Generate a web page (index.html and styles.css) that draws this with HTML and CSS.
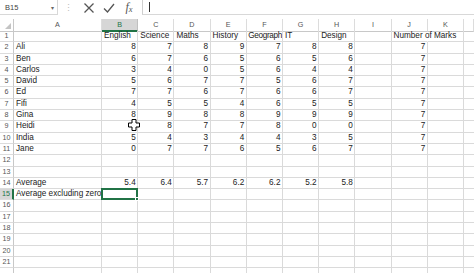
FILE: index.html
```html
<!DOCTYPE html>
<html>
<head>
<meta charset="utf-8">
<link rel="stylesheet" href="styles.css">
</head>
<body>
<div class="fbar">
  <div class="namebox"><span class="nb-text">B15</span><span class="nb-arrow">&#9662;</span></div>
  <div class="grip">&#8942;</div>
  <div class="fbtn">
    <svg width="12" height="12" viewBox="0 0 12 12"><path d="M1.5 1.5 L10.5 10.5 M10.5 1.5 L1.5 10.5" stroke="#555" stroke-width="1.3" fill="none"/></svg>
  </div>
  <div class="fbtn">
    <svg width="12" height="12" viewBox="0 0 12 12"><path d="M1 6.5 L4.5 10 L11 2" stroke="#555" stroke-width="1.3" fill="none"/></svg>
  </div>
  <div class="fbtn fx"><i>f</i><i class="x">x</i></div>
  <div class="finput"><span class="caret"></span></div>
</div>

<div class="sheet">
  <div class="row head">
    <div class="corner"><span class="tri"></span></div>
    <div class="ch">A</div><div class="ch sel">B</div><div class="ch">C</div><div class="ch">D</div><div class="ch">E</div><div class="ch">F</div><div class="ch">G</div><div class="ch">H</div><div class="ch">I</div><div class="ch">J</div><div class="ch">K</div><div class="ch last"></div>
  </div>

  <div class="row"><div class="rh">1</div><div class="c"></div><div class="c t">English</div><div class="c t">Science</div><div class="c t">Maths</div><div class="c t">History</div><div class="c t tight">Geograph</div><div class="c t">IT</div><div class="c t">Design</div><div class="c"></div><div class="c t over">Number of Marks</div><div class="c"></div><div class="c last"></div></div>
  <div class="row"><div class="rh">2</div><div class="c t">Ali</div><div class="c n">8</div><div class="c n">7</div><div class="c n">8</div><div class="c n">9</div><div class="c n">7</div><div class="c n">8</div><div class="c n">8</div><div class="c"></div><div class="c n">7</div><div class="c"></div><div class="c last"></div></div>
  <div class="row"><div class="rh">3</div><div class="c t">Ben</div><div class="c n">6</div><div class="c n">7</div><div class="c n">6</div><div class="c n">5</div><div class="c n">6</div><div class="c n">5</div><div class="c n">6</div><div class="c"></div><div class="c n">7</div><div class="c"></div><div class="c last"></div></div>
  <div class="row"><div class="rh">4</div><div class="c t">Carlos</div><div class="c n">3</div><div class="c n">4</div><div class="c n">0</div><div class="c n">5</div><div class="c n">6</div><div class="c n">4</div><div class="c n">4</div><div class="c"></div><div class="c n">7</div><div class="c"></div><div class="c last"></div></div>
  <div class="row"><div class="rh">5</div><div class="c t">David</div><div class="c n">5</div><div class="c n">6</div><div class="c n">7</div><div class="c n">7</div><div class="c n">5</div><div class="c n">6</div><div class="c n">7</div><div class="c"></div><div class="c n">7</div><div class="c"></div><div class="c last"></div></div>
  <div class="row"><div class="rh">6</div><div class="c t">Ed</div><div class="c n">7</div><div class="c n">7</div><div class="c n">6</div><div class="c n">7</div><div class="c n">6</div><div class="c n">6</div><div class="c n">7</div><div class="c"></div><div class="c n">7</div><div class="c"></div><div class="c last"></div></div>
  <div class="row"><div class="rh">7</div><div class="c t">Fifi</div><div class="c n">4</div><div class="c n">5</div><div class="c n">5</div><div class="c n">4</div><div class="c n">6</div><div class="c n">5</div><div class="c n">5</div><div class="c"></div><div class="c n">7</div><div class="c"></div><div class="c last"></div></div>
  <div class="row"><div class="rh">8</div><div class="c t">Gina</div><div class="c n">8</div><div class="c n">9</div><div class="c n">8</div><div class="c n">8</div><div class="c n">9</div><div class="c n">9</div><div class="c n">9</div><div class="c"></div><div class="c n">7</div><div class="c"></div><div class="c last"></div></div>
  <div class="row"><div class="rh">9</div><div class="c t">Heidi</div><div class="c n"></div><div class="c n">8</div><div class="c n">7</div><div class="c n">7</div><div class="c n">8</div><div class="c n">0</div><div class="c n">0</div><div class="c"></div><div class="c n">7</div><div class="c"></div><div class="c last"></div></div>
  <div class="row"><div class="rh">10</div><div class="c t">India</div><div class="c n">5</div><div class="c n">4</div><div class="c n">3</div><div class="c n">4</div><div class="c n">4</div><div class="c n">3</div><div class="c n">5</div><div class="c"></div><div class="c n">7</div><div class="c"></div><div class="c last"></div></div>
  <div class="row"><div class="rh">11</div><div class="c t">Jane</div><div class="c n">0</div><div class="c n">7</div><div class="c n">7</div><div class="c n">6</div><div class="c n">5</div><div class="c n">6</div><div class="c n">7</div><div class="c"></div><div class="c n">7</div><div class="c"></div><div class="c last"></div></div>
  <div class="row"><div class="rh">12</div><div class="c"></div><div class="c"></div><div class="c"></div><div class="c"></div><div class="c"></div><div class="c"></div><div class="c"></div><div class="c"></div><div class="c"></div><div class="c"></div><div class="c"></div><div class="c last"></div></div>
  <div class="row"><div class="rh">13</div><div class="c"></div><div class="c"></div><div class="c"></div><div class="c"></div><div class="c"></div><div class="c"></div><div class="c"></div><div class="c"></div><div class="c"></div><div class="c"></div><div class="c"></div><div class="c last"></div></div>
  <div class="row"><div class="rh">14</div><div class="c t">Average</div><div class="c n">5.4</div><div class="c n">6.4</div><div class="c n">5.7</div><div class="c n">6.2</div><div class="c n">6.2</div><div class="c n">5.2</div><div class="c n">5.8</div><div class="c"></div><div class="c"></div><div class="c"></div><div class="c last"></div></div>
  <div class="row"><div class="rh sel">15</div><div class="c t">Average excluding zero</div><div class="c active"><span class="handle"></span></div><div class="c"></div><div class="c"></div><div class="c"></div><div class="c"></div><div class="c"></div><div class="c"></div><div class="c"></div><div class="c"></div><div class="c"></div><div class="c last"></div></div>
  <div class="row"><div class="rh">16</div><div class="c"></div><div class="c"></div><div class="c"></div><div class="c"></div><div class="c"></div><div class="c"></div><div class="c"></div><div class="c"></div><div class="c"></div><div class="c"></div><div class="c"></div><div class="c last"></div></div>
  <div class="row"><div class="rh">17</div><div class="c"></div><div class="c"></div><div class="c"></div><div class="c"></div><div class="c"></div><div class="c"></div><div class="c"></div><div class="c"></div><div class="c"></div><div class="c"></div><div class="c"></div><div class="c last"></div></div>
  <div class="row"><div class="rh">18</div><div class="c"></div><div class="c"></div><div class="c"></div><div class="c"></div><div class="c"></div><div class="c"></div><div class="c"></div><div class="c"></div><div class="c"></div><div class="c"></div><div class="c"></div><div class="c last"></div></div>
  <div class="row"><div class="rh">19</div><div class="c"></div><div class="c"></div><div class="c"></div><div class="c"></div><div class="c"></div><div class="c"></div><div class="c"></div><div class="c"></div><div class="c"></div><div class="c"></div><div class="c"></div><div class="c last"></div></div>
  <div class="row"><div class="rh">20</div><div class="c"></div><div class="c"></div><div class="c"></div><div class="c"></div><div class="c"></div><div class="c"></div><div class="c"></div><div class="c"></div><div class="c"></div><div class="c"></div><div class="c"></div><div class="c last"></div></div>
  <div class="row"><div class="rh">21</div><div class="c"></div><div class="c"></div><div class="c"></div><div class="c"></div><div class="c"></div><div class="c"></div><div class="c"></div><div class="c"></div><div class="c"></div><div class="c"></div><div class="c"></div><div class="c last"></div></div>
  <div class="row"><div class="rh"></div><div class="c"></div><div class="c"></div><div class="c"></div><div class="c"></div><div class="c"></div><div class="c"></div><div class="c"></div><div class="c"></div><div class="c"></div><div class="c"></div><div class="c"></div><div class="c last"></div></div>

  <svg class="cursor" width="12" height="12" viewBox="0 0 12 12"><path d="M4 0.5 H8 V4 H11.5 V8 H8 V11.5 H4 V8 H0.5 V4 H4 Z" fill="#fff" stroke="#000" stroke-width="1"/></svg>
</div>
</body>
</html>
```
FILE: styles.css
```css
* { box-sizing: border-box; }
html, body { margin: 0; padding: 0; background: #fff; }
body {
  width: 474px;
  height: 273px;
  overflow: hidden;
  font-family: "Liberation Sans", Arial, sans-serif;
  color: #222;
}

.fbar {
  display: flex;
  height: 15px;
  margin-bottom: 4px;
  align-items: stretch;
}
.namebox {
  width: 58px;
  display: flex;
  align-items: center;
  justify-content: space-between;
  padding: 0 3px 0 5px;
  border-right: 1px solid #d8d8d8;
  border-bottom: 1px solid #d8d8d8;
  font-size: 7.5px;
  color: #444;
}
.nb-arrow { font-size: 6px; color: #666; }
.grip {
  width: 21px;
  display: flex;
  align-items: center;
  justify-content: center;
  color: #bbb;
  font-size: 9px;
}
.fbtn {
  width: 20px;
  display: flex;
  align-items: center;
  justify-content: center;
}
.fx {
  font-family: "Liberation Serif", "Times New Roman", serif;
  font-size: 12px;
  color: #555;
}
.fx .x { font-size: 8.5px; margin-top: 3px; }
.finput {
  flex: 1;
  margin-left: 3px;
  border-left: 1px solid #cfcfcf;
  border-bottom: 1px solid #d8d8d8;
  display: flex;
  align-items: center;
  padding-left: 6px;
}
.caret { width: 1px; height: 10px; background: #333; }

.sheet { position: relative; }
.row {
  display: grid;
  grid-template-columns: 14px 88px repeat(10, 36.2px) 1fr;
  height: 11.3px;
  font-size: 8.2px;
  line-height: 10.3px;
}
.row.head { height: 12px; line-height: 11px; }
.corner {
  position: relative;
  border-right: 1px solid #c8c8c8;
  border-bottom: 1px solid #c8c8c8;
}
.tri {
  position: absolute;
  right: 2px;
  bottom: 2px;
  width: 0; height: 0;
  border-left: 6px solid transparent;
  border-bottom: 6px solid #c4c4c4;
}
.ch {
  text-align: center;
  font-size: 7.2px;
  color: #555;
  border-right: 1px solid #dcdcdc;
  border-bottom: 1px solid #c8c8c8;
}
.ch.sel {
  background: #d6d6d6;
  color: #217346;
  border-bottom: 2px solid #217346;
  border-right-color: #c0c0c0;
}
.rh {
  text-align: center;
  font-size: 7.2px;
  color: #555;
  border-right: 1px solid #c8c8c8;
  border-bottom: 1px solid #dcdcdc;
}
.rh.sel {
  background: #d6d6d6;
  color: #217346;
  border-right: 2px solid #217346;
}
.c {
  border-right: 1px solid #dadada;
  border-bottom: 1px solid #dadada;
  white-space: nowrap;
  overflow: hidden;
  padding: 0 2px;
}
.c.last { border-right: none; }
.c.t { text-align: left; }
.c.tight { letter-spacing: -0.35px; padding-left: 1.5px; padding-right: 0; }
.c.n { text-align: right; padding-right: 1.5px; }
.c.over { overflow: visible; border-right-color: transparent; position: relative; z-index: 1; }
.c.active {
  position: relative;
  border: 2px solid #217346;
  margin: -1px 0 0 -1px;
  overflow: visible;
}
.handle {
  position: absolute;
  right: -3px;
  bottom: -3px;
  width: 4px;
  height: 4px;
  background: #217346;
  border: 1px solid #fff;
}
.cursor {
  position: absolute;
  left: 128px;
  top: 100px;
}
```
